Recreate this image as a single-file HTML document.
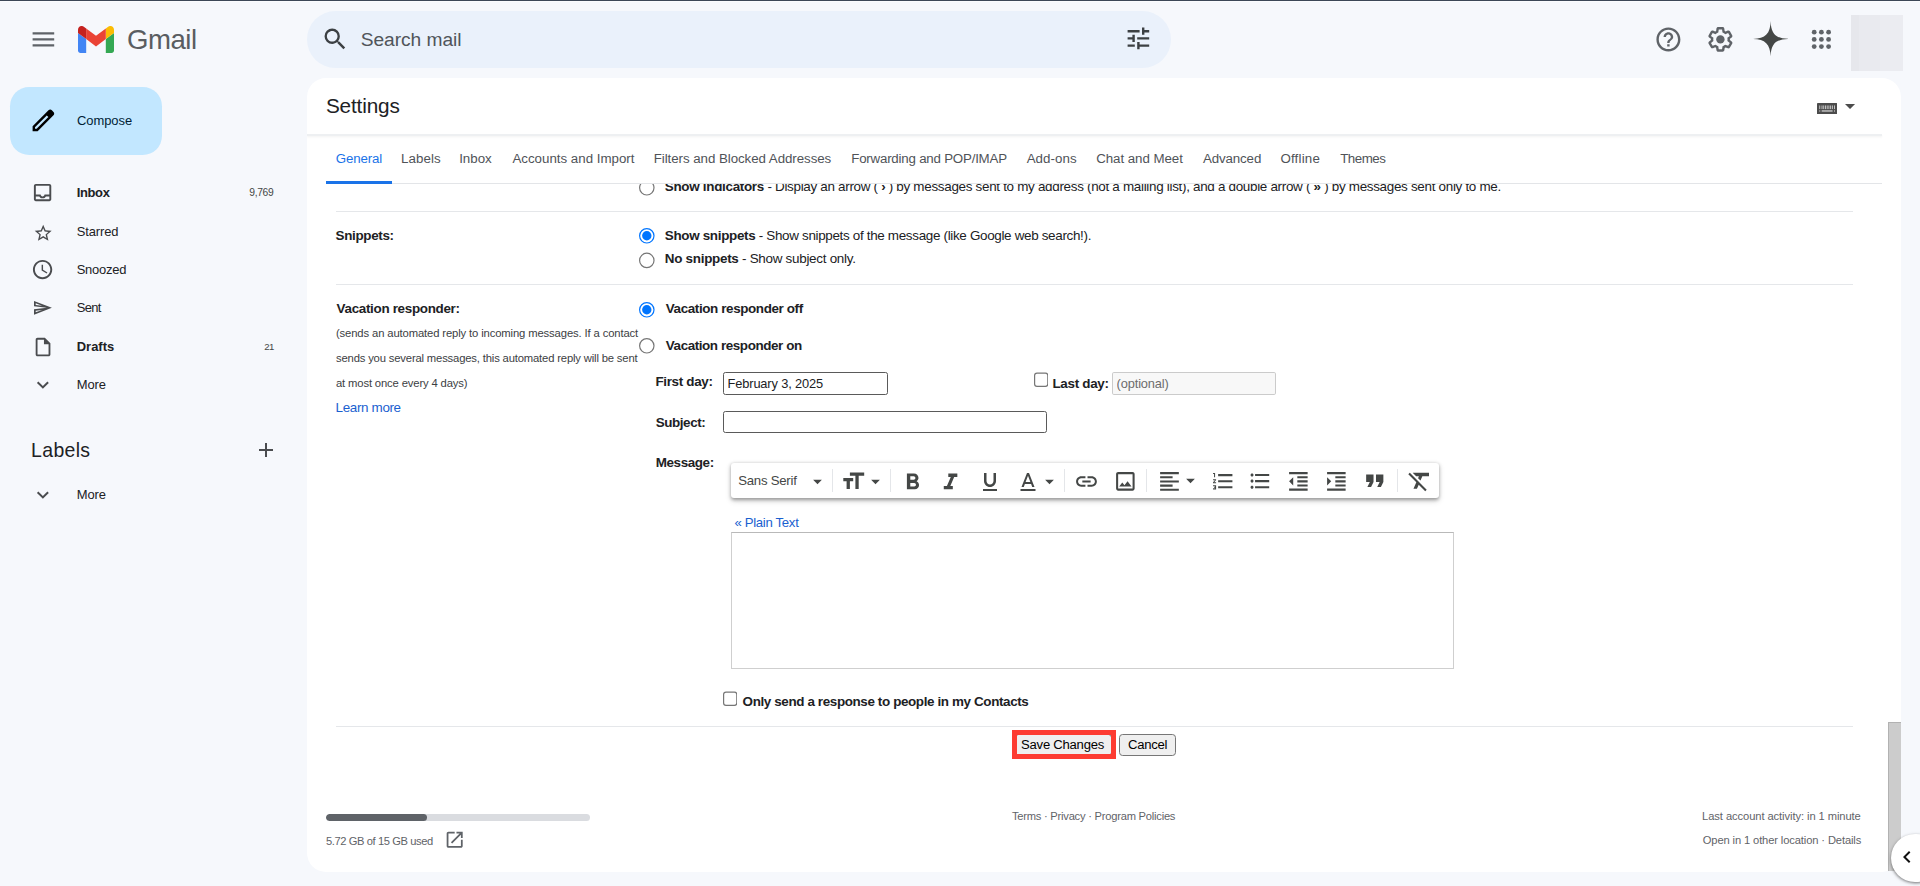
<!DOCTYPE html>
<html lang="en">
<head>
<meta charset="utf-8">
<title>Settings - Gmail</title>
<style>
*{box-sizing:border-box}
html,body{margin:0;padding:0}
html{width:1920px;height:886px;overflow:hidden;background:#f6f8fc}
body{width:1920px;height:886px;overflow:hidden;position:relative;background:#f6f8fc;font-family:"Liberation Sans",sans-serif;color:#202124}
#topline{position:absolute;left:0;top:0;width:1920px;height:2px;background:linear-gradient(#3c4757 0,#3c4757 50%,#fbfcfe 50%,#fbfcfe 100%);z-index:50}
#app{position:absolute;left:0;top:1px;width:1600px;height:738px;zoom:1.2;overflow:hidden}
.abs{position:absolute}
svg{display:block}
a{color:#1a5fd0;text-decoration:none}

/* header */
header{position:absolute;left:0;top:0;width:1600px;height:64px}
.ico{position:absolute;width:24px;height:24px;fill:#5f6368}
#search{position:absolute;left:256px;top:8px;width:720px;height:48px;border-radius:24px;background:#eaf1fb}
#avatar{position:absolute;left:1542.5px;top:11.7px;width:43.4px;height:46.6px;background:linear-gradient(90deg,#e6e7ec 0,#e6e7ec 16%,#e9eaef 16%,#e9eaef 55%,#ebecf1 55%,#ebecf1 100%)}

/* sidebar */
nav{position:absolute;left:0;top:64px;width:256px;height:674px}
#compose{position:absolute;left:8.2px;top:7.4px;width:126.6px;height:56.6px;border-radius:16px;background:#c2e7ff}
.ni{position:absolute;left:0;width:240px;height:32px}
.ni svg{position:absolute;left:26.2px;top:6.1px;width:19.3px;height:19.3px;fill:#4a4c4f}

/* main */
main{position:absolute;left:256px;top:64px;width:1328px;height:662px;background:#fff;border-radius:16px;overflow:hidden}
#hline{position:absolute;left:0;top:47px;width:1312px;height:1px;background:#eef0f2;box-shadow:0 1px 1.5px rgba(60,64,67,.06)}
#tabs{position:absolute;left:16px;top:48px;width:1296px;height:40px;border-bottom:1px solid #e3e5e8}
#tabs i{position:absolute;left:0;top:37.5px;width:55px;height:2.5px;background:#1a73e8}
#scroll{position:absolute;left:0;top:88.5px;width:1328px;height:574px;overflow:hidden}
#inner{position:absolute;left:0;top:-1px;width:1328px;height:575px}

/* settings content */
.tx{position:absolute;white-space:nowrap;font-size:11.2px;line-height:16px;color:#202124}
.bd{font-weight:bold}
.sm{font-size:9.4px;color:#3c4043}
.sep{position:absolute;left:24px;width:1264px;height:1px;background:#e5e7ea}
input[type=radio],input[type=checkbox]{position:absolute;margin:0;width:13px;height:13px}
input[type=radio]{width:13.4px;height:13.4px;margin:-.1px 0 0 -.1px}
input[type=text]{position:absolute;margin:0;padding:1px 3px;font-family:"Liberation Sans",sans-serif;font-size:10.7px;letter-spacing:-.12px;color:#202124;border:1px solid #5a5a5a;border-radius:2px;background:#fff;height:18.6px}
input[type=text]:disabled{border-color:#cbcbcb;border-radius:1.5px;background:#f8f8f8;color:#6d6d6d}
button{position:absolute;margin:0;padding:0;font-family:"Liberation Sans",sans-serif;font-size:10.9px;line-height:14px;color:#000;background:#efefef;border:1px solid #767676;border-radius:3px;height:18px;text-align:center}
#toolbar{position:absolute;left:353px;top:233.3px;width:590.3px;height:29.2px;background:#fff;border-radius:2.5px;box-shadow:0 1px 3px rgba(0,0,0,.32),0 2px 5px rgba(0,0,0,.14)}
#toolbar svg{position:absolute;width:21px;height:21px;fill:#444746}
#toolbar .vs{position:absolute;top:5px;width:.8px;height:19.5px;background:#e4e6e9}
#toolbar .dd{width:20px;height:20px}
#editor{position:absolute;left:353.4px;top:291px;width:602.3px;height:114.4px;border:1px solid #cfcfcf;border-top-color:#b9b9b9;background:#fff}
#redbox{position:absolute;left:587.33px;top:455.92px;width:86.72px;height:24px;border:4.2px solid #fd3c32}
#prog{position:absolute;left:15.5px;top:526px;width:220.2px;height:5.8px;border-radius:3px;background:#dadce0;overflow:hidden}
#prog i{position:absolute;left:0;top:0;width:84.4px;height:100%;background:#5f6368;border-radius:3px}
.ft{color:#5f6368;font-size:9.3px}
#thumb{position:absolute;left:1573.3px;top:601px;width:11px;height:123.5px;background:#cccccc;border-left:1px solid #b2b2b2;border-top:1px solid #b2b2b2}
#sidebtn{position:absolute;left:1575.7px;top:693.9px;width:41px;height:40.4px;border-radius:20.2px;background:#fff;box-shadow:0 1px 3px rgba(0,0,0,.35),0 1px 2px rgba(0,0,0,.2)}
</style>
</head>
<body>
<div id="topline"></div>
<div id="app">

<header>
  <svg class="ico" style="left:24px;top:20px" viewBox="0 0 24 24"><path d="M3 18h18v-2H3v2zm0-5h18v-2H3v2zm0-7v2h18V6H3z"/></svg>
  <svg class="abs" style="left:65px;top:20.5px;width:30px;height:22.5px" viewBox="0 0 40 30">
    <path fill="#4285f4" d="M2.7 30h6.4V14.5L0 7.7v19.6C0 28.8 1.2 30 2.7 30z"/>
    <path fill="#34a853" d="M30.9 30h6.4c1.5 0 2.7-1.2 2.7-2.7V7.7l-9.1 6.8V30z"/>
    <path fill="#fbbc04" d="M30.9 2.7v11.8L40 7.7V4.1c0-3.4-3.9-5.3-6.5-3.3l-2.6 1.9z"/>
    <path fill="#ea4335" d="M9.1 14.5V2.7L20 10.9l10.9-8.2v11.8L20 22.7 9.1 14.500z"/>
    <path fill="#c5221f" d="M0 4.100v3.600l9.100 6.800V2.700L6.500.800C3.900-1.200 0 .700 0 4.100z"/>
  </svg>
  <div class="tx" id="t_gmail" style="left:105.83px;top:18.95px;font-size:23px;line-height:26px;color:#5a5d61;letter-spacing:-0.417px">Gmail</div>
  <div id="search">
    <svg class="ico" style="left:11.7px;top:12px;width:23.6px;height:23.6px;fill:#3c4043" viewBox="0 0 24 24"><path d="M15.5 14h-.79l-.28-.27A6.471 6.471 0 0 0 16 9.500 6.500 6.500 0 1 0 9.500 16c1.610 0 3.090-.590 4.230-1.570l.27.280v.790l5 4.990L20.490 19l-4.990-5zm-6 0C7.010 14 5 11.990 5 9.500S7.010 5 9.500 5 14 7.010 14 9.500 11.990 14 9.500 14z"/></svg>
    <span class="tx" id="t_search" style="left:44.59px;top:14.20px;font-size:16px;line-height:20px;color:#50555a;letter-spacing:-0.042px">Search mail</span>
    <svg class="ico" style="left:680.7px;top:10.9px;fill:#3c4043" viewBox="0 0 24 24"><path d="M3 17v2h6v-2H3zM3 5v2h10V5H3zm10 16v-2h8v-2h-8v-2h-2v6h2zM7 9v2H3v2h4v2h2V9H7zm14 4v-2H11v2h10zm-6-4h2V7h4V5h-4V3h-2v6z"/></svg>
  </div>
  <svg class="ico" style="left:1378px;top:20px" viewBox="0 0 24 24"><path d="M11 18h2v-2h-2v2zm1-16C6.480 2 2 6.480 2 12s4.480 10 10 10 10-4.480 10-10S17.520 2 12 2zm0 18c-4.410 0-8-3.590-8-8s3.590-8 8-8 8 3.590 8 8-3.590 8-8 8zm0-14c-2.210 0-4 1.790-4 4h2c0-1.100.9-2 2-2s2 .9 2 2c0 2-3 1.750-3 5h2c0-2.250 3-2.500 3-5 0-2.210-1.790-4-4-4z"/></svg>
  <svg class="ico" style="left:1421.500px;top:20px" viewBox="0 0 24 24"><path d="M13.850 22.250h-3.700c-.74 0-1.360-.54-1.450-1.270l-.27-1.890c-.27-.14-.53-.29-.79-.46l-1.800.72c-.7.26-1.470-.03-1.810-.65L2.200 15.530c-.35-.66-.2-1.440.36-1.880l1.530-1.190c-.01-.15-.02-.3-.02-.46 0-.15.010-.31.020-.46l-1.520-1.190c-.59-.45-.74-1.260-.37-1.880l1.850-3.190c.34-.62 1.110-.9 1.790-.63l1.810.73c.26-.17.52-.32.78-.46l.27-1.910c.09-.7.71-1.250 1.440-1.250h3.700c.74 0 1.360.54 1.450 1.270l.27 1.890c.27.14.53.29.79.46l1.800-.72c.71-.26 1.480.03 1.820.65l1.840 3.180c.36.66.2 1.440-.36 1.880l-1.520 1.190c.01.15.02.3.02.46s-.01.31-.02.46l1.520 1.190c.56.45.72 1.230.37 1.860l-1.860 3.220c-.34.62-1.110.9-1.800.63l-1.800-.72c-.26.17-.52.32-.78.46l-.27 1.910c-.1.680-.72 1.220-1.460 1.220zm-3.230-2h2.760l.37-2.550.53-.22c.44-.18.880-.44 1.340-.78l.45-.34 2.380.96 1.380-2.400-2.030-1.580.07-.56c.03-.26.06-.51.06-.78s-.03-.53-.06-.78l-.07-.56 2.030-1.580-1.390-2.400-2.390.96-.45-.35c-.42-.32-.87-.58-1.330-.77l-.52-.22-.37-2.550h-2.760l-.37 2.550-.53.21c-.44.19-.88.44-1.340.79l-.45.33-2.380-.95-1.390 2.390 2.030 1.580-.07.56a7 7 0 0 0-.06.79c0 .26.020.53.060.78l.07.56-2.030 1.580 1.380 2.400 2.390-.96.45.35c.43.33.86.58 1.330.77l.53.22.38 2.550z"/><circle cx="12" cy="12" r="3.500"/></svg>
  <svg class="ico" style="left:1460.900px;top:16.300px;width:29.400px;height:29.800px;fill:#444746" viewBox="0 0 24 24" preserveAspectRatio="none"><path d="M12 0C12.200 8.500 15.500 11.800 24 12C15.500 12.200 12.200 15.500 12 24C11.800 15.500 8.500 12.200 0 12C8.500 11.800 11.800 8.500 12 0z"/></svg>
  <svg class="ico" style="left:1505.500px;top:20px" viewBox="0 0 24 24"><g><circle cx="6" cy="6" r="2"/><circle cx="12" cy="6" r="2"/><circle cx="18" cy="6" r="2"/><circle cx="6" cy="12" r="2"/><circle cx="12" cy="12" r="2"/><circle cx="18" cy="12" r="2"/><circle cx="6" cy="18" r="2"/><circle cx="12" cy="18" r="2"/><circle cx="18" cy="18" r="2"/></g></svg>
  <div id="avatar"></div>
</header>

<nav>
  <div id="compose">
    <svg class="abs" style="left:16px;top:16px;width:24px;height:24px" viewBox="0 0 24 24"><path fill="#000" d="M20.410 4.940l-1.350-1.350c-.780-.780-2.050-.780-2.830 0L3 16.820V21h4.180L20.410 7.770c.790-.780.790-2.050 0-2.830zm-14.060 14.060H5v-1.350l9.800-9.800 1.350 1.350L6.350 19z"/></svg>
    <span class="tx" id="t_compose" style="left:55.92px;top:19.28px;font-size:10.8px;line-height:18px;color:#001d35;letter-spacing:-0.027px">Compose</span>
  </div>
  <div class="ni b" style="top:80px"><svg viewBox="0 0 24 24"><path d="M19 3H5c-1.100 0-2 .9-2 2v14c0 1.100.890 2 2 2h14c1.100 0 2-.9 2-2V5c0-1.100-.9-2-2-2zm0 16H5v-3h3.560c.690 1.190 1.970 2 3.450 2s2.750-.810 3.450-2H19v3zm0-5h-4.990c0 1.100-.9 2-2 2s-2-.9-2-2H5V5h14v9z"/></svg><span class="tx" id="t_inbox" style="left:63.92px;top:7.43px;font-size:10.8px;font-weight:bold;letter-spacing:-0.291px">Inbox</span><span class="tx" id="t_c1" style="left:207.71px;top:7.36px;font-size:8.6px;color:#444746;letter-spacing:-0.292px">9,769</span></div>
  <div class="ni" style="top:112px"><svg style="left:27.3px;top:8.7px;width:17px;height:17px" viewBox="0 0 24 24"><path d="M22 9.240l-7.190-.62L12 2 9.190 8.630 2 9.240l5.460 4.730L5.820 21 12 17.270 18.180 21l-1.630-7.030L22 9.240zM12 15.400l-3.760 2.270 1-4.280-3.320-2.880 4.380-.38L12 6.100l1.710 4.040 4.380.38-3.320 2.880 1 4.280L12 15.400z"/></svg><span class="tx" id="t_starred" style="left:63.92px;top:7.86px;font-size:10.8px;letter-spacing:-0.089px">Starred</span></div>
  <div class="ni" style="top:144px"><svg viewBox="0 0 24 24"><path d="M11.990 2C6.470 2 2 6.480 2 12s4.470 10 9.990 10C17.520 22 22 17.520 22 12S17.520 2 11.990 2zM12 20c-4.420 0-8-3.580-8-8s3.580-8 8-8 8 3.580 8 8-3.580 8-8 8zm.5-13H11v6l5.250 3.150.75-1.230-4.500-2.670z"/></svg><span class="tx" id="t_snoozed" style="left:63.92px;top:7.60px;font-size:10.8px;letter-spacing:-0.208px">Snoozed</span></div>
  <div class="ni" style="top:176px"><svg style="left:28.3px;top:10px;width:14.9px;height:11.4px" viewBox="2 3 21 18" preserveAspectRatio="none"><path d="M4.010 6.030l7.510 3.220-7.520-1 .01-2.220m7.500 8.720L4 17.970v-2.220l7.510-1M2.010 3L2 10l15 2-15 2 .01 7L23 12 2.010 3z"/></svg><span class="tx" id="t_sent" style="left:63.92px;top:7.27px;font-size:10.8px;letter-spacing:-0.556px">Sent</span></div>
  <div class="ni b" style="top:208px"><svg style="left:26.6px;top:7.2px;width:18.4px;height:18.4px" viewBox="0 0 24 24"><path d="M14 2H6c-1.100 0-1.990.9-1.990 2L4 20c0 1.100.890 2 1.990 2H18c1.100 0 2-.9 2-2V8l-6-6zM6 20V4h7v5h5v11H6z"/></svg><span class="tx" id="t_drafts" style="left:63.92px;top:7.69px;font-size:10.8px;font-weight:bold;letter-spacing:0.017px">Drafts</span><span class="tx" id="t_c2" style="left:220.3px;top:7.9px;font-size:8px;color:#444746;letter-spacing:-0.55px">21</span></div>
  <div class="ni" style="top:240px"><svg style="left:25.9px;top:5.75px;width:19.8px;height:19.8px" viewBox="0 0 24 24"><path d="M16.590 8.590L12 13.170 7.410 8.590 6 10l6 6 6-6z"/></svg><span class="tx" id="t_more1" style="left:63.92px;top:7.35px;font-size:10.8px;letter-spacing:-0.042px">More</span></div>
  <div class="tx" id="t_labels" style="left:25.92px;top:298.35px;font-size:16.2px;line-height:24px;letter-spacing:0.284px">Labels</div>
  <svg class="abs" style="left:211.7px;top:300.3px;width:20px;height:20px;fill:#4a4c4f" viewBox="0 0 24 24"><path d="M19 13h-6v6h-2v-6H5v-2h6V5h2v6h6v2z"/></svg>
  <div class="ni" style="top:331px"><svg style="left:25.9px;top:6.15px;width:19.8px;height:19.8px" viewBox="0 0 24 24"><path d="M16.590 8.590L12 13.170 7.410 8.590 6 10l6 6 6-6z"/></svg><span class="tx" id="t_more2" style="left:63.92px;top:8.11px;font-size:10.8px;letter-spacing:-0.042px">More</span></div>
</nav>

<main>
    <svg class="abs" style="left:1258px;top:20.800px;width:16.900px;height:9.500px" viewBox="0 0 20 11"><rect x="0" y="0" width="20" height="11" rx=".7" fill="#4c4c4c"/><g fill="#cfcfcf"><rect x="2.300" y="2.300" width=".9" height="3.600"/><rect x="4.500" y="2.300" width=".9" height="3.600"/><rect x="6.200" y="2.300" width=".9" height="3.600"/><rect x="7.900" y="2.300" width=".9" height="3.600"/><rect x="9.600" y="2.300" width=".9" height="3.600"/><rect x="11.300" y="2.300" width=".9" height="3.600"/><rect x="13" y="2.300" width=".9" height="3.600"/><rect x="14.700" y="2.300" width=".9" height="3.600"/><rect x="16.800" y="2.300" width=".9" height="3.600"/><rect x="2.300" y="7.100" width=".9" height="1.300"/><rect x="4.600" y="7.100" width="10.800" height="1.300"/><rect x="16.800" y="7.100" width=".9" height="1.300"/></g></svg>
  <svg class="abs" style="left:1281.900px;top:21.500px;width:8.400px;height:4.200px" viewBox="0 0 10 5"><path fill="#4c4c4c" d="M0 0h10L5 5z"/></svg>
  <div class="tx" id="t_title" style="left:15.58px;top:12.52px;font-size:17.3px;line-height:22px;letter-spacing:-0.120px">Settings</div>
  <div id="hline"></div>
  <div id="tabs">
    <i></i>
    <span class="tx" id="t_tab0" style="left:7.80px;top:10.98px;font-size:11.1px;color:#1a73e8;letter-spacing:-0.138px">General</span>
    <span class="tx" id="t_tab1" style="left:62.17px;top:10.98px;font-size:11.1px;color:#4f5358;letter-spacing:0.083px">Labels</span>
    <span class="tx" id="t_tab2" style="left:110.67px;top:10.98px;font-size:11.1px;color:#4f5358;letter-spacing:0.000px">Inbox</span>
    <span class="tx" id="t_tab3" style="left:155.03px;top:10.98px;font-size:11.1px;color:#4f5358;letter-spacing:0.000px">Accounts and Import</span>
    <span class="tx" id="t_tab4" style="left:272.80px;top:10.98px;font-size:11.1px;color:#4f5358;letter-spacing:-0.046px">Filters and Blocked Addresses</span>
    <span class="tx" id="t_tab5" style="left:437.42px;top:10.98px;font-size:11.1px;color:#4f5358;letter-spacing:-0.182px">Forwarding and POP/IMAP</span>
    <span class="tx" id="t_tab6" style="left:583.59px;top:10.98px;font-size:11.1px;color:#4f5358;letter-spacing:0.055px">Add-ons</span>
    <span class="tx" id="t_tab7" style="left:641.51px;top:10.98px;font-size:11.1px;color:#4f5358;letter-spacing:-0.042px">Chat and Meet</span>
    <span class="tx" id="t_tab8" style="left:730.42px;top:10.98px;font-size:11.1px;color:#4f5358;letter-spacing:-0.094px">Advanced</span>
    <span class="tx" id="t_tab9" style="left:795.01px;top:10.98px;font-size:11.1px;color:#4f5358;letter-spacing:0.167px">Offline</span>
    <span class="tx" id="t_tab10" style="left:844.83px;top:10.98px;font-size:11.1px;color:#4f5358;letter-spacing:-0.384px">Themes</span>
  </div>
  <div id="scroll"><div id="inner">
    <input type="radio" name="ind" style="left:276.5px;top:-2.6px">
    <span class="tx" id="t_ind" style="left:298.00px;top:-4.91px;letter-spacing:-0.256px"><b>Show indicators</b> - Display an arrow ( <b>›</b> ) by messages sent to my address (not a mailing list), and a double arrow ( <b>»</b> ) by messages sent only to me.</span>
    <div class="sep" style="top:23.4px"></div>

    <span class="tx bd" id="t_snl" style="left:23.67px;top:35.43px;letter-spacing:-0.281px">Snippets:</span>
    <input type="radio" name="snip" checked style="left:276.5px;top:37.8px">
    <span class="tx" id="t_sn1" style="left:298.00px;top:35.43px;letter-spacing:-0.274px"><b>Show snippets</b> - Show snippets of the message (like Google web search!).</span>
    <input type="radio" name="snip" style="left:276.5px;top:58px">
    <span class="tx" id="t_sn2" style="left:298.00px;top:54.94px;letter-spacing:-0.236px"><b>No snippets</b> - Show subject only.</span>
    <div class="sep" style="top:84.3px"></div>

    <span class="tx bd" id="t_vl" style="left:24.51px;top:96.84px;letter-spacing:-0.268px">Vacation responder:</span>
    <span class="tx sm" id="t_v1" style="left:24.00px;top:117.49px;letter-spacing:-0.110px">(sends an automated reply to incoming messages. If a contact</span>
    <span class="tx sm" id="t_v2" style="left:24.00px;top:138.32px;letter-spacing:-0.142px">sends you several messages, this automated reply will be sent</span>
    <span class="tx sm" id="t_v3" style="left:24.00px;top:159.15px;letter-spacing:-0.124px">at most once every 4 days)</span>
    <a class="tx" id="t_lm" style="left:23.67px;top:179.26px;color:#1a5fd0;letter-spacing:-0.296px">Learn more</a>
    <input type="radio" name="vac" checked style="left:276.5px;top:98.9px">
    <span class="tx bd" id="t_voff" style="left:298.83px;top:96.84px;letter-spacing:-0.328px">Vacation responder off</span>
    <input type="radio" name="vac" style="left:276.5px;top:129.1px">
    <span class="tx bd" id="t_von" style="left:298.83px;top:127.10px;letter-spacing:-0.354px">Vacation responder on</span>

    <span class="tx bd" id="t_fd" style="left:290.20px;top:157.31px;letter-spacing:-0.277px">First day:</span>
    <input type="text" id="in_fd" value="February 3, 2025" style="left:346.5px;top:157.7px;width:137.3px">
    <input type="checkbox" style="left:605.3px;top:157.8px">
    <span class="tx bd" id="t_ld" style="left:621.00px;top:159.18px;letter-spacing:-0.250px">Last day:</span>
    <input type="text" id="in_ld" value="(optional)" disabled style="left:670.7px;top:157.7px;width:136.7px">

    <span class="tx bd" id="t_sj" style="left:290.42px;top:191.68px;letter-spacing:-0.357px">Subject:</span>
    <input type="text" id="in_sj" value="" style="left:346.5px;top:190.2px;width:270px;height:18px">

    <span class="tx bd" id="t_msg" style="left:290.42px;top:225.02px;letter-spacing:-0.328px">Message:</span>
    <div id="toolbar">
      <span class="tx" id="t_ss" style="left:6.20px;top:6.73px;font-size:11px;color:#444746;letter-spacing:-0.209px">Sans Serif</span>
      <svg style="left:63.63px;top:6.47px;width:17.50px;height:17.50px" viewBox="0 0 24 24"><path d="M7 10l5 5 5-5z"/></svg>
      <svg style="left:90.83px;top:4.63px;width:22.00px;height:22.00px" viewBox="0 0 24 24"><path d="M9 4v3h5v12h3V7h5V4H9zm-6 8h3v7h3v-7h3V9H3v3z"/></svg>
      <svg style="left:111.54px;top:6.47px;width:17.50px;height:17.50px" viewBox="0 0 24 24"><path d="M7 10l5 5 5-5z"/></svg>
      <svg style="left:140.28px;top:4.81px;width:22.60px;height:22.60px" viewBox="0 0 24 24"><path d="M15.6 10.79c.97-.67 1.65-1.77 1.65-2.79 0-2.26-1.75-4-4-4H7v14h7.04c2.09 0 3.71-1.7 3.71-3.79 0-1.52-.86-2.82-2.15-3.42zM10 6.5h3c.83 0 1.5.67 1.5 1.5s-.67 1.5-1.5 1.5h-3v-3zm3.5 9H10v-3h3.5c.83 0 1.5.67 1.5 1.5s-.67 1.5-1.5 1.5z"/></svg>
      <svg style="left:172.16px;top:4.81px;width:22.60px;height:22.60px" viewBox="0 0 24 24"><path d="M10 4v3h2.21l-3.42 8H6v3h8v-3h-2.21l3.42-8H18V4z"/></svg>
      <svg style="left:205.83px;top:6.08px;width:20.00px;height:20.00px" viewBox="0 0 24 24"><path d="M12 17c3.31 0 6-2.69 6-6V3h-2.5v8c0 1.93-1.57 3.5-3.5 3.5S8.5 12.930 8.5 11V3H6v8c0 3.31 2.69 6 6 6zm-7 2v2h14v-2H5z"/></svg>
      <svg style="left:237.63px;top:5.67px;width:20.00px;height:20.00px" viewBox="0 0 24 24"><path d="M11 3L5.5 17h2.25l1.120-3h6.250l1.120 3h2.250L13 3h-2zm-1.380 9L12 5.670 14.380 12H9.620zM4.500 19h15v2h-15z"/></svg>
      <svg style="left:256.96px;top:6.47px;width:17.50px;height:17.50px" viewBox="0 0 24 24"><path d="M7 10l5 5 5-5z"/></svg>
      <svg style="left:285.64px;top:5.02px;width:20.80px;height:20.80px" viewBox="0 0 24 24"><path d="M3.9 12c0-1.71 1.39-3.1 3.1-3.1h4V7H7c-2.76 0-5 2.24-5 5s2.24 5 5 5h4v-1.9H7c-1.71 0-3.1-1.39-3.1-3.1zM8 13h8v-2H8v2zm9-6h-4v1.9h4c1.71 0 3.1 1.39 3.1 3.1s-1.39 3.1-3.1 3.1h-4V17h4c2.76 0 5-2.24 5-5s-2.24-5-5-5z"/></svg>
      <svg style="left:318.16px;top:4.95px;width:20.60px;height:20.60px" viewBox="0 0 24 24"><path d="M19 5v14H5V5h14m0-2H5c-1.1 0-2 .9-2 2v14c0 1.1.9 2 2 2h14c1.1 0 2-.9 2-2V5c0-1.1-.9-2-2-2zm-4.860 8.860l-3 3.870L9 13.140 6 17h12l-3.860-5.140z"/></svg>
      <svg style="left:354.81px;top:4.93px;width:20.80px;height:20.80px" viewBox="0 0 24 24"><path d="M15 15H3v2h12v-2zm0-8H3v2h12V7zM3 13h18v-2H3v2zm0 8h18v-2H3v2zM3 3v2h18V3H3z"/></svg>
      <svg style="left:374.58px;top:6.30px;width:17.50px;height:17.50px" viewBox="0 0 24 24"><path d="M7 10l5 5 5-5z"/></svg>
      <svg style="left:399.81px;top:4.97px;width:20.40px;height:20.40px" viewBox="0 0 24 24"><path d="M2 17h2v.5H3v1h1v.5H2v1h3v-4H2v1zm1-9h1V4H2v1h1v3zm-1 3h1.8L2 13.1v.9h3v-1H3.2L5 10.9V10H2v1zm5-6v2h14V5H7zm0 14h14v-2H7v2zm0-6h14v-2H7v2z"/></svg>
      <svg style="left:431.15px;top:4.98px;width:20.20px;height:20.20px" viewBox="0 0 24 24"><path d="M4 10.5c-.83 0-1.5.67-1.5 1.5s.67 1.5 1.5 1.5 1.5-.67 1.5-1.5-.67-1.5-1.5-1.5zm0-6c-.83 0-1.5.67-1.5 1.5S3.170 7.5 4 7.5 5.5 6.830 5.5 6 4.830 4.500 4 4.500zm0 12c-.83 0-1.5.68-1.5 1.500s.68 1.500 1.500 1.500 1.500-.68 1.500-1.500-.67-1.500-1.500-1.500zM7 19h14v-2H7v2zm0-6h14v-2H7v2zm0-8v2h14V5H7z"/></svg>
      <svg style="left:462.99px;top:4.87px;width:20.60px;height:20.60px" viewBox="0 0 24 24"><path d="M11 17h10v-2H11v2zm-8-5l4 4V8l-4 4zm0 9h18v-2H3v2zM3 3v2h18V3H3zm8 6h10V7H11v2zm0 4h10v-2H11v2z"/></svg>
      <svg style="left:494.66px;top:4.87px;width:20.60px;height:20.60px" viewBox="0 0 24 24"><path d="M3 21h18v-2H3v2zM3 8v8l4-4-4-4zm8 9h10v-2H11v2zM3 3v2h18V3H3zm8 6h10V7H11v2zm0 4h10v-2H11v2z"/></svg>
      <svg style="left:524.74px;top:2.95px;width:24.60px;height:24.60px" viewBox="0 0 24 24"><path d="M6 17h3l2-4V7H5v6h3zm8 0h3l2-4V7h-6v6h3z"/></svg>
      <svg style="left:562.67px;top:3.38px;width:23.00px;height:23.00px" viewBox="0 0 24 24"><path d="M3.270 5L2 6.270l6.970 6.970L6.500 19h3l1.570-3.660L16.730 21 18 19.730 3.550 5.270 3.270 5zM6 5v.18L8.820 8h2.400l-.72 1.680 2.100 2.100L14.210 8H20V5H6z"/></svg>
      <i class="vs" style="left:84.39px"></i>
      <i class="vs" style="left:132.72px"></i>
      <i class="vs" style="left:277.73px"></i>
      <i class="vs" style="left:346.31px"></i>
      <i class="vs" style="left:555.31px"></i>
    </div>
    <a class="tx" id="t_pt" style="left:356.00px;top:275.02px;font-size:11px;color:#1a5fd0;letter-spacing:-0.265px">« Plain Text</a>
    <div id="editor"></div>

    <input type="checkbox" style="left:346.3px;top:423.4px">
    <span class="tx bd" id="t_only" style="left:362.83px;top:423.98px;letter-spacing:-0.321px">Only send a response to people in my Contacts</span>
    <div class="sep" style="top:452.5px"></div>

    <button id="b_save" style="left:590.25px;top:459.17px;width:80.83px;height:18.2px;padding-right:2.4px;letter-spacing:-.2px">Save Changes</button>
    <div id="redbox"></div>
    <button id="b_cancel" style="left:676.75px;top:459.5px;width:47.17px;height:17.85px;letter-spacing:-.2px">Cancel</button>

    <div id="prog"><i></i></div>
    <span class="tx ft" id="t_gb" style="left:15.58px;top:540.77px;font-size:9.3px;letter-spacing:-0.334px">5.72 GB of 15 GB used</span>
    <svg class="abs" style="left:114.2px;top:538px;width:17.8px;height:17.8px;fill:#5f6368" viewBox="0 0 24 24"><path d="M19 19H5V5h7V3H5c-1.110 0-2 .9-2 2v14c0 1.100.890 2 2 2h14c1.100 0 2-.9 2-2v-7h-2v7zM14 3v2h3.590l-9.830 9.830 1.410 1.410L19 6.410V10h2V3h-7z"/></svg>
    <span class="tx ft" id="t_terms" style="left:587.25px;top:519.74px;letter-spacing:-0.190px">Terms · Privacy · Program Policies</span>
    <span class="tx ft" id="t_act" style="left:1162.42px;top:519.94px;letter-spacing:-0.063px">Last account activity: in 1 minute</span>
    <span class="tx ft" id="t_open" style="left:1163.00px;top:540.19px;letter-spacing:-0.101px">Open in 1 other location · Details</span>
  </div></div>
</main>
<div id="thumb"></div>
<div id="sidebtn"><svg class="abs" style="left:3.5px;top:9.700px;width:20px;height:20px;fill:#111" viewBox="0 0 24 24"><path d="M15.410 7.410L14 6l-6 6 6 6 1.410-1.410L10.830 12z"/></svg></div>

</div>
</body>
</html>
